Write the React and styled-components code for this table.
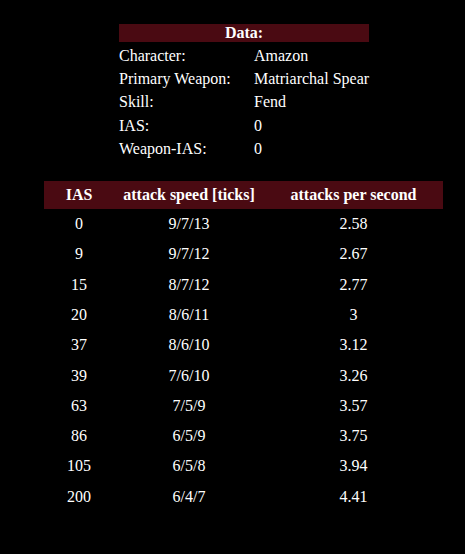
import React from "react";
import styled, { createGlobalStyle } from "styled-components";

const data = [
  ["Character:", "Amazon"],
  ["Primary Weapon:", "Matriarchal Spear"],
  ["Skill:", "Fend"],
  ["IAS:", "0"],
  ["Weapon-IAS:", "0"],
];

const rows = [
  ["0", "9/7/13", "2.58"],
  ["9", "9/7/12", "2.67"],
  ["15", "8/7/12", "2.77"],
  ["20", "8/6/11", "3"],
  ["37", "8/6/10", "3.12"],
  ["39", "7/6/10", "3.26"],
  ["63", "7/5/9", "3.57"],
  ["86", "6/5/9", "3.75"],
  ["105", "6/5/8", "3.94"],
  ["200", "6/4/7", "4.41"],
];

const App = () => {
  return (
    <>
      <GlobalStyle />
      <Page>
        <DataTable>
          <DataHead>Data:</DataHead>
          {data.map(([label, value]) => (
            <DataRow key={label}>
              <span>{label}</span>
              <span>{value}</span>
            </DataRow>
          ))}
        </DataTable>
        <SpeedTable>
          <HeadRow>
            <Cell>IAS</Cell>
            <Cell>attack speed [ticks]</Cell>
            <Cell>attacks per second</Cell>
          </HeadRow>
          {rows.map((r) => (
            <BodyRow key={r[0]}>
              {r.map((v, i) => (
                <Cell key={i}>{v}</Cell>
              ))}
            </BodyRow>
          ))}
        </SpeedTable>
      </Page>
    </>
  );
};

const GlobalStyle = createGlobalStyle`
  html, body {
    margin: 0;
    background: #000;
    color: #fff;
    font-family: "Liberation Serif", "Times New Roman", serif;
    font-size: 16px;
  }
`;

const Page = styled.div`
  width: 465px;
  height: 554px;
  padding-top: 24px;
  box-sizing: border-box;
  display: flex;
  flex-direction: column;
  align-items: flex-start;
`;

const DataTable = styled.div`
  margin-left: 119px;
  width: 250px;
  display: flex;
  flex-direction: column;
`;

const DataHead = styled.div`
  background: #4a0a12;
  height: 18px;
  line-height: 18px;
  text-align: center;
  font-weight: bold;
  margin-bottom: 2px;
`;

const DataRow = styled.div`
  display: grid;
  grid-template-columns: 135px 1fr;
  height: 23.2px;
  line-height: 23px;
  white-space: nowrap;
`;

const SpeedTable = styled.div`
  margin-left: 44px;
  margin-top: 21px;
  width: 399px;
  display: flex;
  flex-direction: column;
`;

const HeadRow = styled.div`
  display: grid;
  grid-template-columns: 70px 150px 179px;
  height: 28px;
  align-items: center;
  background: #4a0a12;
  font-weight: bold;
`;

const BodyRow = styled.div`
  display: grid;
  grid-template-columns: 70px 150px 179px;
  height: 30.3px;
  align-items: center;
`;

const Cell = styled.div`
  text-align: center;
  white-space: nowrap;
`;

export default App;
